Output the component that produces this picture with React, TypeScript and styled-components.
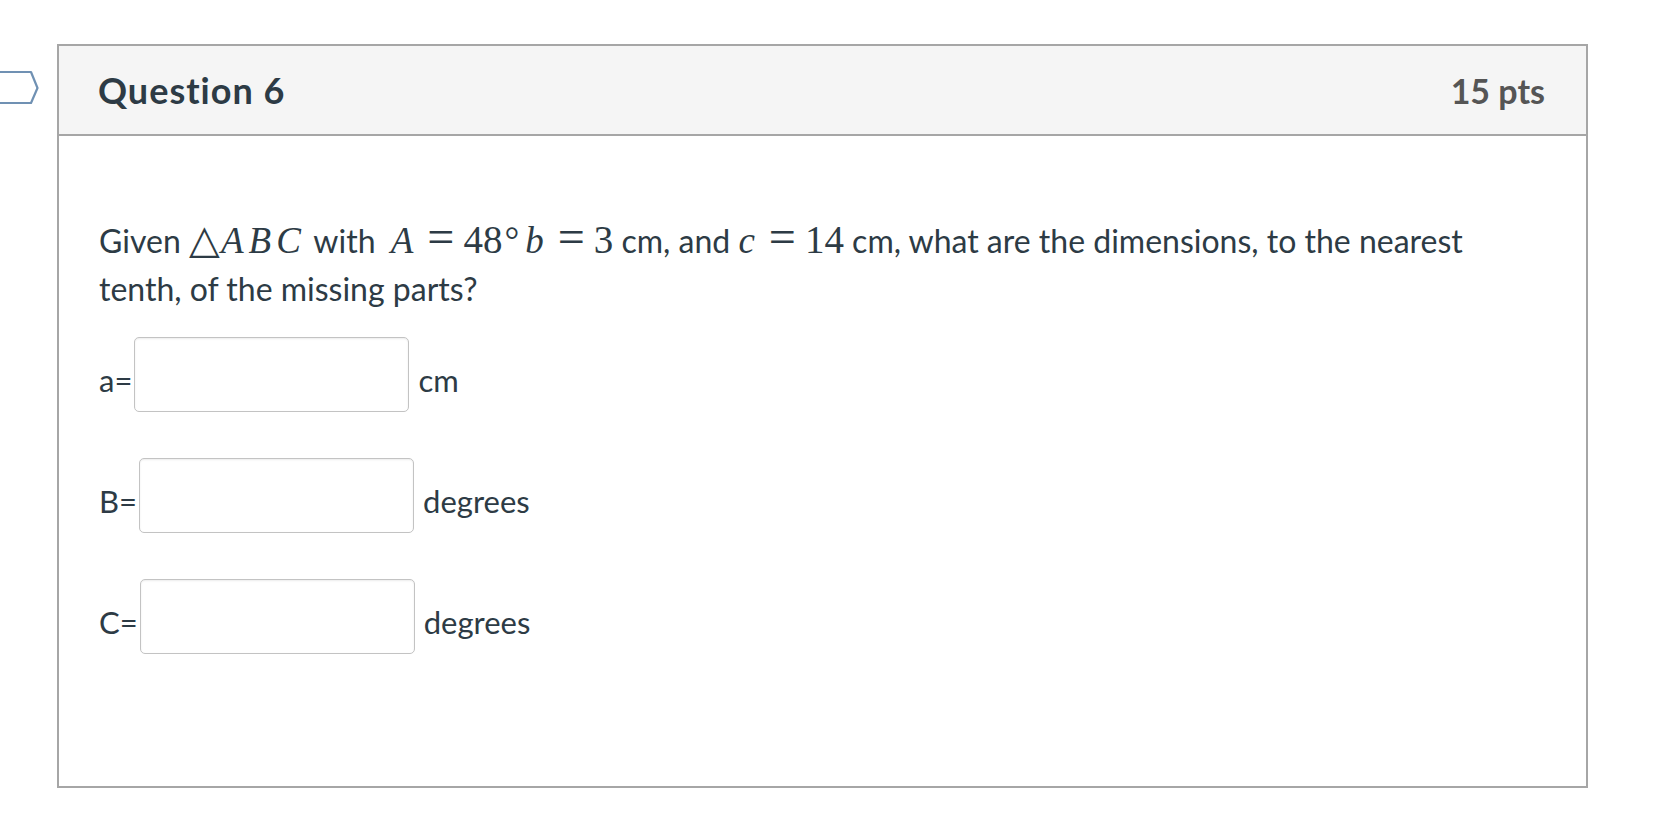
import React from "react";
import styled, { createGlobalStyle } from "styled-components";

const GlobalStyle = createGlobalStyle`
  html, body {
    margin: 0;
    padding: 0;
    background: #ffffff;
  }
  body {
    font-family: Lato, "Open Sans", "Liberation Sans", sans-serif;
    color: #2d3b45;
  }
`;

const Page = styled.div`
  position: relative;
  padding: 44px 0 40px 57px;
`;

const FlagMarker = styled.svg`
  position: absolute;
  left: 0;
  top: 70px;
`;

const QuestionBox = styled.div`
  width: 1531px;
  box-sizing: border-box;
  border: 2px solid #a6a6a6;
  background: #ffffff;
`;

const Header = styled.div`
  display: flex;
  align-items: center;
  justify-content: space-between;
  height: 88px;
  padding: 0 41px 0 39px;
  background: #f5f5f5;
  border-bottom: 2px solid #a6a6a6;
  font-weight: 700;
`;

const Title = styled.h2`
  margin: 0;
  font-size: 36px;
  font-weight: inherit;
  letter-spacing: 1px;
  color: #2d3b45;
`;

const Points = styled.div`
  font-size: 34px;
  color: #555555;
`;

const Body = styled.div`
  padding: 81px 41px 132px 40px;
`;

const Prompt = styled.p`
  margin: 0 0 24px;
  max-width: 1405px;
  font-size: 32px;
  line-height: 48px;
`;

const MathText = styled.span`
  font-family: "Liberation Serif", "Times New Roman", serif;
  font-size: 37px;
  line-height: 0;
`;

const Mi = styled(MathText)<{ $lead?: boolean }>`
  font-style: italic;
  letter-spacing: 5px;
  margin-left: ${(p) => (p.$lead ? "7px" : "0")};
`;

const Mn = styled(MathText)`
  font-size: 39px;
`;

const Mo = styled(MathText)`
  font-size: 48px;
  margin: 0 9px;
`;

const Triangle = styled.span`
  font-family: "DejaVu Sans", sans-serif;
  font-size: 40px;
  font-weight: 300;
  line-height: 0;
  margin-right: 1px;
`;

const Degree = styled(MathText)`
  margin: 0 6px 0 2px;
`;

const AnswerRow = styled.div<{ $first?: boolean }>`
  display: flex;
  align-items: flex-end;
  margin-top: ${(p) => (p.$first ? "0" : "46px")};
  font-size: 31px;
  line-height: 1.2;
`;

const Label = styled.span`
  margin-bottom: 13px;
`;

const AnswerInput = styled.input`
  box-sizing: border-box;
  width: 275px;
  height: 75px;
  margin-left: 2px;
  border: 1px solid #c3c3c3;
  border-radius: 5px;
  background: #ffffff;
  box-shadow: inset 0 1px 2px rgba(0, 0, 0, 0.08);
  font-family: Lato, sans-serif;
  font-size: 27px;
  padding: 0 12px;
  outline: none;
`;

const Unit = styled.span`
  margin: 0 0 13px 9px;
`;

const answers = [
  { label: "a=", unit: "cm" },
  { label: "B=", unit: "degrees" },
  { label: "C=", unit: "degrees" },
];

export default function App() {
  return (
    <>
      <GlobalStyle />
      <Page>
        <FlagMarker width="40" height="36" viewBox="0 0 40 36">
          <path
            d="M -6 2 H 31 L 37.5 18 L 31 33 H -6 Z"
            fill="#ffffff"
            stroke="#7091b3"
            strokeWidth="2.2"
            strokeLinejoin="round"
          />
        </FlagMarker>
        <QuestionBox>
          <Header>
            <Title>Question 6</Title>
            <Points>15 pts</Points>
          </Header>
          <Body>
            <Prompt>
              Given <Triangle>△</Triangle>
              <Mi>ABC</Mi> with <Mi $lead>A</Mi>
              <Mo>=</Mo>
              <Mn>48</Mn>
              <Degree>°</Degree>
              <Mi>b</Mi>
              <Mo>=</Mo>
              <Mn>3</Mn> cm, and <Mi>c</Mi>
              <Mo>=</Mo>
              <Mn>14</Mn> cm, what are the dimensions, to the nearest tenth, of
              the missing parts?
            </Prompt>
            {answers.map((a, i) => (
              <AnswerRow key={a.label} $first={i === 0}>
                <Label>{a.label}</Label>
                <AnswerInput type="text" aria-label={a.label} />
                <Unit>{a.unit}</Unit>
              </AnswerRow>
            ))}
          </Body>
        </QuestionBox>
      </Page>
    </>
  );
}
